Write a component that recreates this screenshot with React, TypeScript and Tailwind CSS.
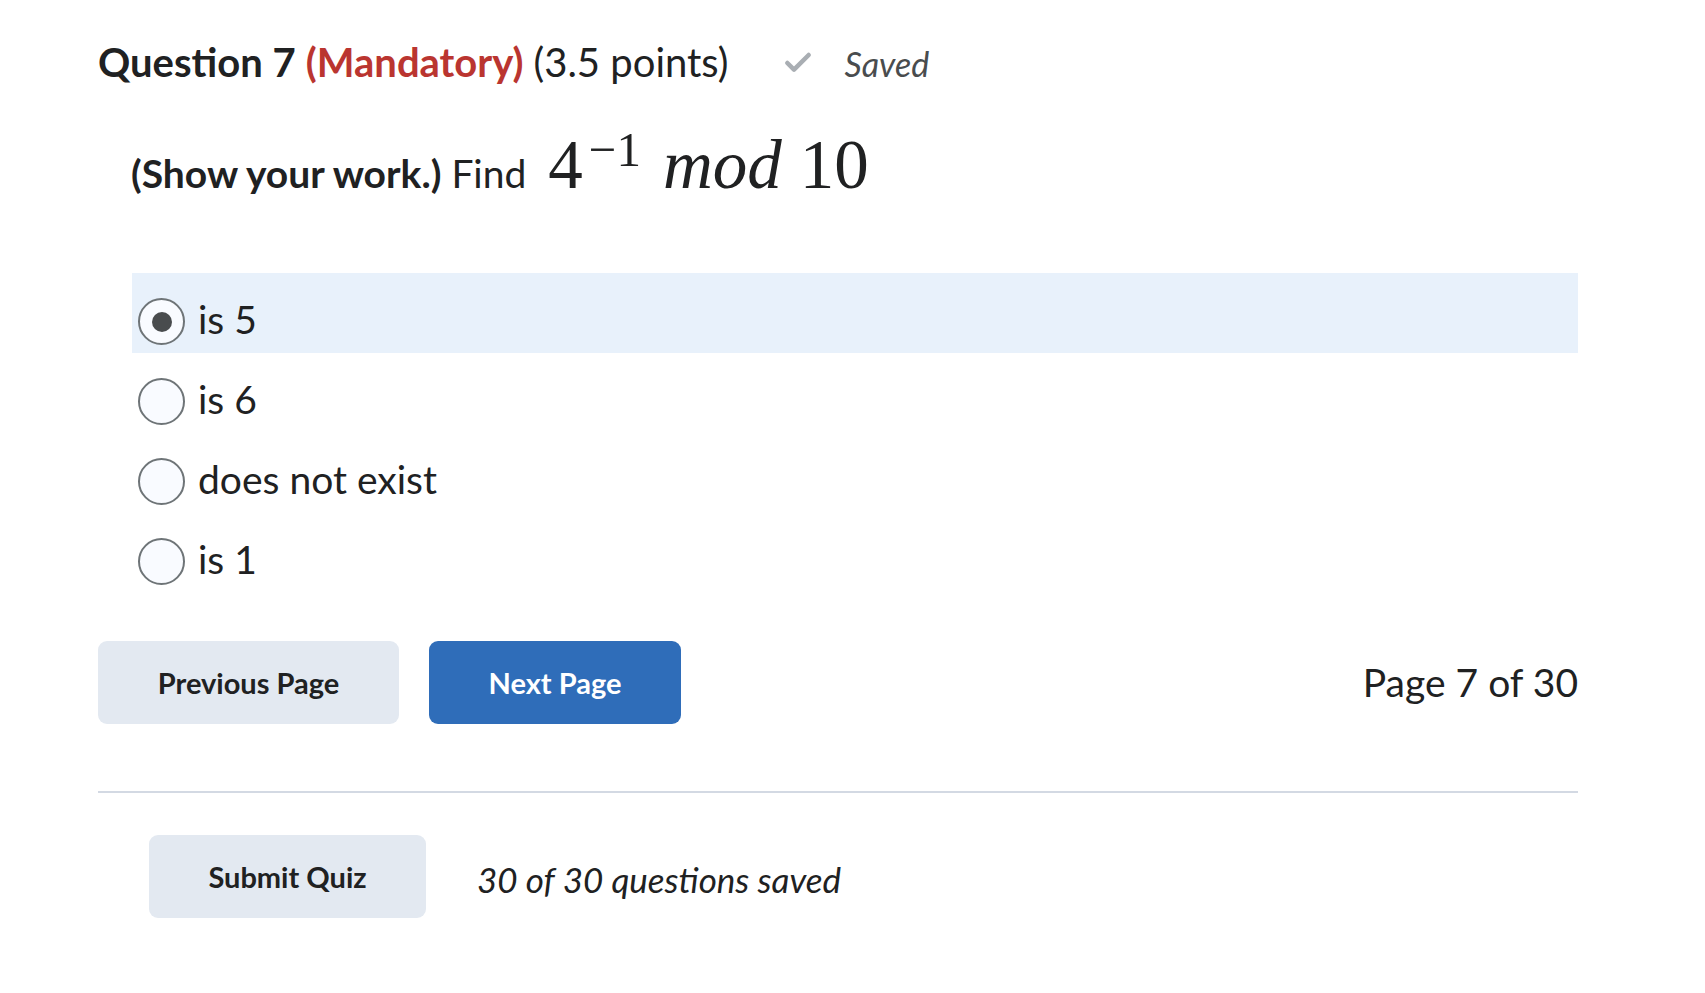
import { Check } from 'lucide-react';

const choices = ['is 5', 'is 6', 'does not exist', 'is 1'];

function Radio({ checked }: { checked: boolean }) {
  return (
    <span className="flex h-[47px] w-[47px] shrink-0 items-center justify-center rounded-full border-2 border-[#6e7477] bg-[#f9fbff]">
      {checked && <span className="h-[20px] w-[20px] rounded-full bg-[#494c4e]" />}
    </span>
  );
}

export default function App() {
  const selected = 0;

  return (
    <div className="min-h-screen bg-white font-['Lato',sans-serif] text-[#202122]">
      <div className="w-[1578px] pl-[98px] pt-[35px]">
        <div className="flex items-baseline text-[40px] leading-[54px]">
          <span className="font-bold">Question 7</span>
          <span className="ml-[10px] font-bold text-[#ba3530]">(Mandatory)</span>
          <span className="ml-[10px]">(3.5 points)</span>
          <span className="ml-[54px] flex items-center self-center">
            <Check className="h-[32px] w-[32px] text-[#a9aeb3]" strokeWidth={3.4} />
          </span>
          <span className="ml-[30px] text-[34px] italic text-[#494c4e]">Saved</span>
        </div>

        <div className="mt-[34px] flex h-[84px] items-baseline pl-[33px]">
          <span className="text-[39px] font-bold">(Show your work.)</span>
          <span className="ml-[10px] text-[39px]">Find</span>
          <span className="ml-[22px] font-['Liberation_Serif',serif] text-[69px] leading-[80px]">
            4
            <sup className="relative top-[-22px] ml-[6px] text-[49px]">−1</sup>
            <span className="ml-[22px] italic">mod</span>
            <span className="ml-[18px]">10</span>
          </span>
        </div>

        <div className="mt-[64px] pl-[34px]">
          {choices.map((c, i) => (
            <label
              key={c}
              className={`flex h-[80px] items-start gap-[13px] pl-[6px] pt-[25px] ${i === selected ? 'bg-[#e8f1fb]' : ''}`}
            >
              <Radio checked={i === selected} />
              <span className="text-[39px] leading-[43px]">{c}</span>
            </label>
          ))}
        </div>

        <div className="mt-[48px] flex items-center justify-between">
          <div className="flex gap-[30px]">
            <button className="h-[83px] w-[301px] rounded-[9px] bg-[#e3e9f1] text-[29px] font-bold">
              Previous Page
            </button>
            <button className="h-[83px] w-[252px] rounded-[9px] bg-[#2f6db9] text-[29px] font-bold text-white">
              Next Page
            </button>
          </div>
          <span className="text-[39px]">Page 7 of 30</span>
        </div>

        <hr className="mt-[67px] border-t-2 border-[#d3d9e3]" />

        <div className="mt-[42px] flex items-center pl-[51px]">
          <button className="h-[83px] w-[277px] rounded-[9px] bg-[#e3e9f1] text-[29px] font-bold">
            Submit Quiz
          </button>
          <span className="ml-[51px] mt-[6px] text-[35px] italic">30 of 30 questions saved</span>
        </div>
      </div>
    </div>
  );
}
